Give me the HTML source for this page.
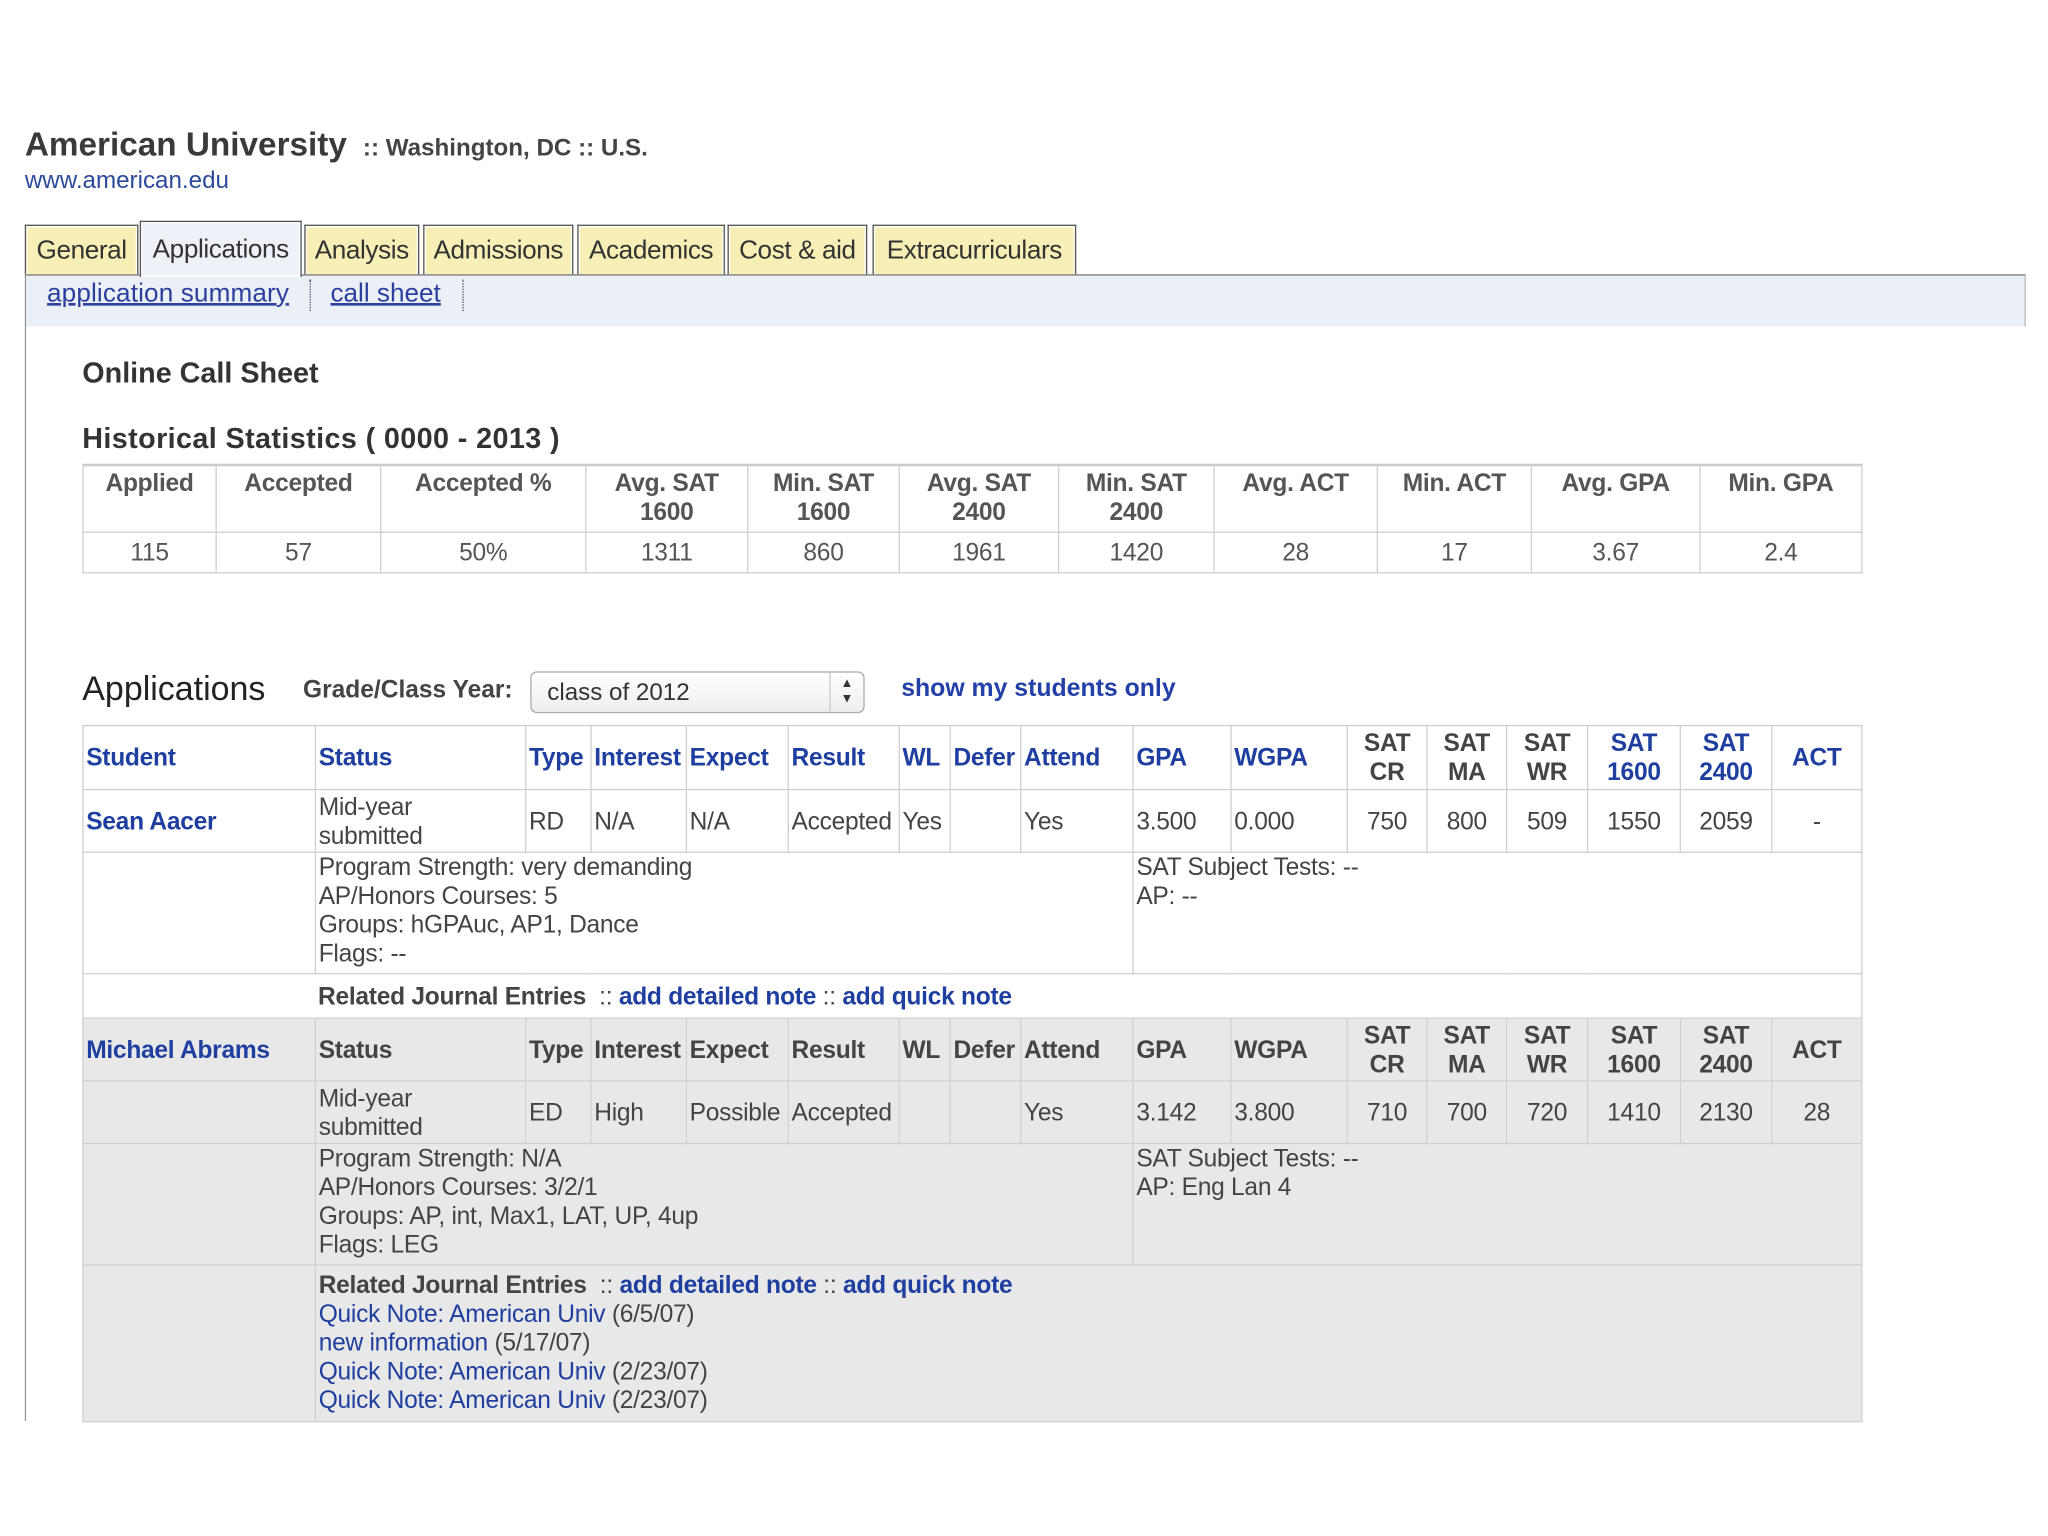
<!DOCTYPE html>
<html><head><meta charset="utf-8"><style>
html,body{margin:0;padding:0;background:#fff;width:2048px;height:1536px;overflow:hidden}
#w{position:absolute;left:0;top:0;width:1568px;height:1176px;transform:scale(1.30612);transform-origin:0 0;font-family:"Liberation Sans",Arial,sans-serif;color:#444}
.a{position:absolute;white-space:nowrap}
.blue{color:#1f3fa0}
.tab{position:absolute;top:172px;height:38px;background:#f7efb5;border:1px solid #555;border-bottom:none;font-size:20px;line-height:38px;text-align:center;color:#333;box-shadow:inset 0 0 0 1px #fff;letter-spacing:-0.3px}
table{border-collapse:collapse;table-layout:fixed;position:absolute}
td{border:1px solid #cfcfcf;padding:0 2px;font-size:18.8px;line-height:22px;vertical-align:middle;overflow:hidden;white-space:nowrap;color:#444;letter-spacing:-0.2px}
.st td{text-align:center;color:#555}
.st tr.h td{font-weight:bold;vertical-align:top;padding-top:2px}
.h td{font-weight:bold}
.c{text-align:center}
.g td{background:#e8e8e8}
.top{vertical-align:top}
b.bl{color:#1f3fa0}
</style></head><body><div id="w">
<div class="a" style="left:19px;top:97px;font-size:25.5px;font-weight:bold;color:#3a3a3a">American University <span style="font-size:18.5px;color:#444">&nbsp;:: Washington, DC :: U.S.</span></div>
<div class="a blue" style="left:19px;top:127px;font-size:18.5px;color:#2b4a9c">www.american.edu</div>

<div class="tab" style="left:19px;width:85px">General</div>
<div class="tab" style="left:107px;top:169px;height:42px;width:122px;background:#eef2f8;line-height:42px;z-index:2">Applications</div>
<div class="tab" style="left:233px;width:86px">Analysis</div>
<div class="tab" style="left:324px;width:113px">Admissions</div>
<div class="tab" style="left:442px;width:111px">Academics</div>
<div class="tab" style="left:557px;width:105px">Cost &amp; aid</div>
<div class="tab" style="left:668px;width:154px">Extracurriculars</div>

<div class="a" style="left:19px;top:210px;width:1531px;height:39px;background:#ebf0f7;border-top:1px solid #777;border-right:1px solid #bbb"></div>
<div class="a" style="left:19px;top:210px;width:1px;height:878px;background:#999"></div>
<div class="a" style="left:36px;top:214px;font-size:20px;color:#2b3f9e;text-decoration:underline;letter-spacing:0.1px">application summary</div>
<div class="a" style="left:237px;top:214px;height:24px;border-left:1px dotted #446"></div>
<div class="a" style="left:253px;top:214px;font-size:20px;color:#2b3f9e;text-decoration:underline">call sheet</div>
<div class="a" style="left:354px;top:214px;height:24px;border-left:1px dotted #446"></div>

<div class="a" style="left:63px;top:273px;font-size:22px;font-weight:bold;color:#333">Online Call Sheet</div>
<div class="a" style="left:63px;top:323px;font-size:22px;font-weight:bold;color:#333;letter-spacing:0.3px">Historical Statistics ( 0000 - 2013 )</div>

<table class="st" style="left:63px;top:355px;width:1362px;border-top:2px solid #ccc">
<colgroup><col style="width:102px"><col style="width:126px"><col style="width:157px"><col style="width:124px"><col style="width:116px"><col style="width:122px"><col style="width:119px"><col style="width:125px"><col style="width:118px"><col style="width:129px"><col style="width:124px"></colgroup>
<tr class="h" style="height:51px"><td>Applied</td><td>Accepted</td><td>Accepted %</td><td>Avg. SAT<br>1600</td><td>Min. SAT<br>1600</td><td>Avg. SAT<br>2400</td><td>Min. SAT<br>2400</td><td>Avg. ACT</td><td>Min. ACT</td><td>Avg. GPA</td><td>Min. GPA</td></tr>
<tr style="height:31px"><td>115</td><td>57</td><td>50%</td><td>1311</td><td>860</td><td>1961</td><td>1420</td><td>28</td><td>17</td><td>3.67</td><td>2.4</td></tr>
</table>

<div class="a" style="left:63px;top:512px;font-size:26px;color:#222">Applications</div>
<div class="a" style="left:232px;top:517px;font-size:18.8px;font-weight:bold;color:#444">Grade/Class Year:</div>
<div class="a" style="left:406px;top:514px;width:254px;height:30px;border:1px solid #aaa;border-radius:5px;background:linear-gradient(#fff,#eee);font-size:18.5px;line-height:30px;color:#333"><span style="padding-left:12px">class of 2012</span><span style="position:absolute;right:0;top:0;width:26px;height:30px;border-left:1px solid #ccc;text-align:center;font-size:10px;line-height:12px;padding-top:3px;box-sizing:border-box">▲<br>▼</span></div>
<div class="a" style="left:690px;top:517px;font-size:19px;font-weight:bold;color:#2340a8">show my students only</div>

<table style="left:63px;top:555px;width:1362px">
<colgroup><col style="width:178px"><col style="width:161px"><col style="width:50px"><col style="width:73px"><col style="width:78px"><col style="width:85px"><col style="width:39px"><col style="width:54px"><col style="width:86px"><col style="width:75px"><col style="width:89px"><col style="width:61px"><col style="width:61px"><col style="width:62px"><col style="width:71px"><col style="width:70px"><col style="width:69px"></colgroup>
<tr class="h" style="height:49px"><td class="blue">Student</td><td class="blue">Status</td><td class="blue">Type</td><td class="blue">Interest</td><td class="blue">Expect</td><td class="blue">Result</td><td class="blue">WL</td><td class="blue">Defer</td><td class="blue">Attend</td><td class="blue">GPA</td><td class="blue">WGPA</td><td class="c">SAT<br>CR</td><td class="c">SAT<br>MA</td><td class="c">SAT<br>WR</td><td class="c blue">SAT<br>1600</td><td class="c blue">SAT<br>2400</td><td class="c blue">ACT</td></tr>
<tr style="height:48px"><td><b class="bl">Sean Aacer</b></td><td>Mid-year<br>submitted</td><td>RD</td><td>N/A</td><td>N/A</td><td>Accepted</td><td>Yes</td><td></td><td>Yes</td><td>3.500</td><td>0.000</td><td class="c">750</td><td class="c">800</td><td class="c">509</td><td class="c">1550</td><td class="c">2059</td><td class="c">-</td></tr>
<tr style="height:93px"><td></td><td colspan="8" class="top">Program Strength: very demanding<br>AP/Honors Courses: 5<br>Groups: hGPAuc, AP1, Dance<br>Flags: --</td><td colspan="8" class="top">SAT Subject Tests: --<br>AP: --</td></tr>
<tr style="height:34px"><td style="border-right:none"></td><td colspan="16" style="border-left:none"><b>Related Journal Entries</b> &nbsp;:: <b class="bl">add detailed note</b> :: <b class="bl">add quick note</b></td></tr>
<tr class="h g" style="height:48px"><td class="blue">Michael Abrams</td><td>Status</td><td>Type</td><td>Interest</td><td>Expect</td><td>Result</td><td>WL</td><td>Defer</td><td>Attend</td><td>GPA</td><td>WGPA</td><td class="c">SAT<br>CR</td><td class="c">SAT<br>MA</td><td class="c">SAT<br>WR</td><td class="c">SAT<br>1600</td><td class="c">SAT<br>2400</td><td class="c">ACT</td></tr>
<tr class="g" style="height:48px"><td></td><td>Mid-year<br>submitted</td><td>ED</td><td>High</td><td>Possible</td><td>Accepted</td><td></td><td></td><td>Yes</td><td>3.142</td><td>3.800</td><td class="c">710</td><td class="c">700</td><td class="c">720</td><td class="c">1410</td><td class="c">2130</td><td class="c">28</td></tr>
<tr class="g" style="height:93px"><td></td><td colspan="8" class="top">Program Strength: N/A<br>AP/Honors Courses: 3/2/1<br>Groups: AP, int, Max1, LAT, UP, 4up<br>Flags: LEG</td><td colspan="8" class="top">SAT Subject Tests: --<br>AP: Eng Lan 4</td></tr>
<tr class="g" style="height:120px"><td></td><td colspan="16" class="top" style="padding-top:4px"><b>Related Journal Entries</b> &nbsp;:: <b class="bl">add detailed note</b> :: <b class="bl">add quick note</b><br><span class="blue">Quick Note: American Univ</span> (6/5/07)<br><span class="blue">new information</span> (5/17/07)<br><span class="blue">Quick Note: American Univ</span> (2/23/07)<br><span class="blue">Quick Note: American Univ</span> (2/23/07)</td></tr>
</table>
</div></body></html>
